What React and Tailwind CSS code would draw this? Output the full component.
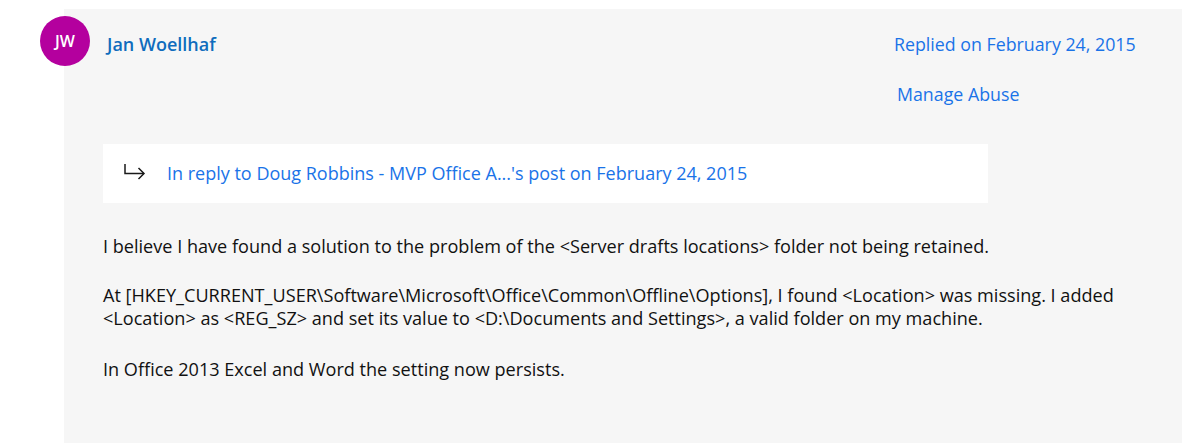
export default function App() {
  return (
    <div className="min-h-[443px] bg-white pt-[9px] font-['Open_Sans',sans-serif]">
      <div className="relative ml-[64px] mr-[6px] min-h-[434px] bg-[#f6f6f6] pl-[39px] pr-[48px]">
        {/* avatar sits half outside the panel */}
        <div className="absolute left-[-24px] top-[7px] flex h-[50px] w-[50px] items-center justify-center rounded-full bg-[#b4009e] text-[16px] font-semibold text-white">
          JW
        </div>

        <div className="flex items-start justify-between pt-[24px]">
          <a className="pl-[4px] text-[18px] font-semibold leading-[22px] text-[#0f6cbd]">Jan Woellhaf</a>
          <div className="flex w-[240px] flex-col items-start">
            <span className="whitespace-nowrap text-[17.8px] leading-[22px] text-[#1a73e8]">Replied on February 24, 2015</span>
            <a className="ml-[3px] mt-[28px] text-[17.8px] leading-[22px] text-[#1a73e8]">Manage Abuse</a>
          </div>
        </div>

        <div className="mt-[39px] flex h-[59px] w-[885px] items-center bg-white pl-[21px]">
          <svg width="22" height="17" viewBox="0 0 22 17" fill="none" stroke="#1a1a1a" strokeWidth="1.5" className="mr-[21px] mb-[2px]">
            <path d="M1 0v9.5h19" />
            <path d="M14.5 4l5.5 5.5-5.5 5.5" />
          </svg>
          <a className="text-[18px] text-[#1a73e8]">In reply to Doug Robbins - MVP Office A...'s post on February 24, 2015</a>
        </div>

        <div className="mt-[32px] text-[18.1px] leading-[23px] text-[#111]">
          <p>I believe I have found a solution to the problem of the &lt;Server drafts locations&gt; folder not being retained.</p>
          <p className="mt-[26px]">
            At [HKEY_CURRENT_USER\Software\Microsoft\Office\Common\Offline\Options], I found &lt;Location&gt; was missing. I added &lt;Location&gt; as &lt;REG_SZ&gt; and set its value to &lt;D:\Documents and Settings&gt;, a valid folder on my machine.
          </p>
          <p className="mt-[28px]">In Office 2013 Excel and Word the setting now persists.</p>
        </div>
      </div>
    </div>
  );
}
